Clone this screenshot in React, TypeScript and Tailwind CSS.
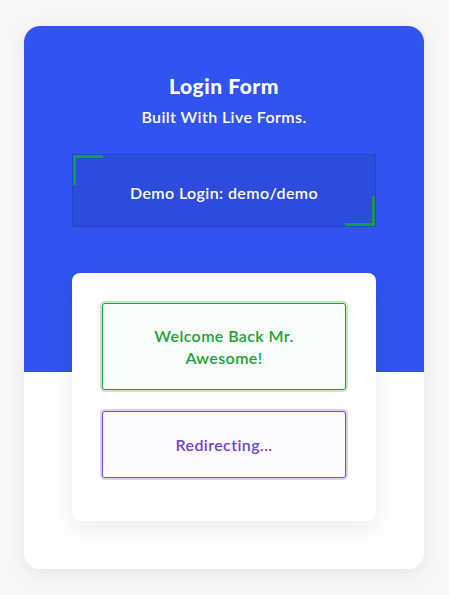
const font = { fontFamily: 'Lato, "Noto Sans", sans-serif' };

function Corner({ side }: { side: 'tl' | 'br' }) {
  return (
    <span
      className={
        side === 'tl'
          ? 'absolute left-0 top-0 h-[30px] w-[30px] border-l-[3px] border-t-[3px] border-[#16994c]'
          : 'absolute bottom-0 right-0 h-[30px] w-[30px] border-b-[3px] border-r-[3px] border-[#16994c]'
      }
    />
  );
}

export default function App() {
  return (
    <div className="min-h-[595px] bg-[#f7f7f7] px-6 pt-[26px]" style={font}>
      <div className="flex w-[400px] flex-col rounded-2xl bg-[linear-gradient(to_bottom,#3153ef_346px,#ffffff_346px)] px-12 pb-12 pt-[46px] shadow-[0_4px_20px_rgba(0,0,0,0.07)]">
        <h1 className="text-center text-[21px] font-black leading-7 tracking-wide text-white">Login Form</h1>
        <p className="mt-[5px] text-center text-base font-semibold leading-6 tracking-wide text-white">Built With Live Forms.</p>

        <div className="relative mt-[25px] flex h-[73px] items-center justify-center border border-[#2844c6] bg-[#2d4bdc]">
          <Corner side="tl" />
          <Corner side="br" />
          <span className="pt-1 text-base font-semibold tracking-wide text-white">Demo Login: demo/demo</span>
        </div>

        <div className="mt-[46px] flex flex-col gap-[21px] rounded-lg bg-white px-[30px] pb-[43px] pt-[30px] shadow-[0_8px_28px_rgba(0,0,0,0.08)]">
          <div className="flex h-[87px] items-center justify-center rounded-[3px] border border-[#1ea33f] bg-[#f8fdf9] ring-2 ring-[#c3e6cb]">
            <span className="max-w-[170px] text-center text-base font-semibold leading-[22px] tracking-wide text-[#18a33b]">
              Welcome Back Mr. Awesome!
            </span>
          </div>
          <div className="flex h-[67px] items-center justify-center rounded-[3px] border border-[#7a4fd8] bg-[#fcfbff] ring-2 ring-[#dacef6]">
            <span className="text-base font-semibold tracking-wide text-[#6c46cc]">Redirecting...</span>
          </div>
        </div>
      </div>
    </div>
  );
}
